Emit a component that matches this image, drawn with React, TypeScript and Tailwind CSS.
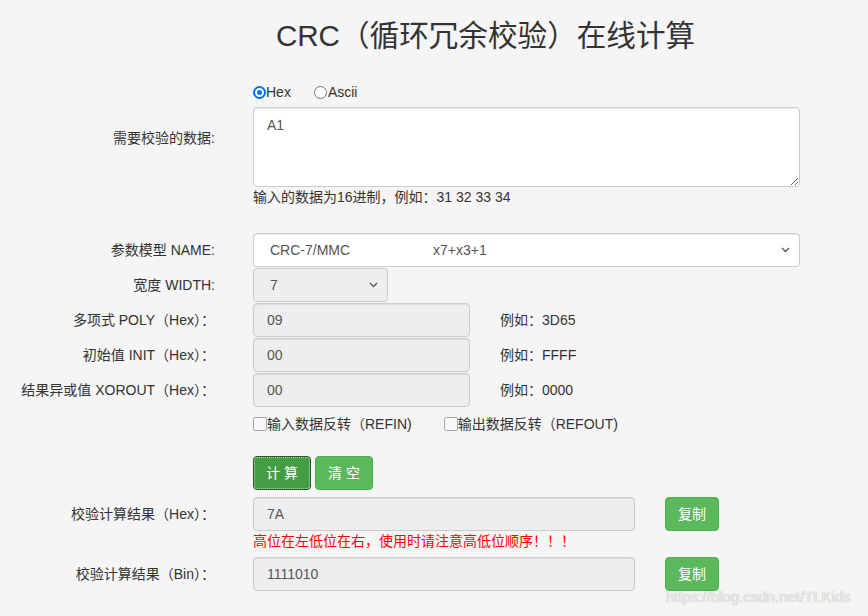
import React from "react";

const font = { fontFamily: '"Liberation Sans", "Noto Sans CJK SC", sans-serif' };

function Chevron() {
  return (
    <svg width="9" height="6" viewBox="0 0 9 6" className="shrink-0">
      <path d="M1 1 L4.5 4.5 L8 1" fill="none" stroke="#555" strokeWidth="1.3" />
    </svg>
  );
}

function Label({ children, className = "" }: { children: React.ReactNode; className?: string }) {
  return (
    <div className={"w-[215px] shrink-0 text-right text-[14px] leading-5 text-[#333] " + className}>
      {children}
    </div>
  );
}

function Row({ label, children }: { label: string; children: React.ReactNode }) {
  return (
    <div className="flex h-[34px] items-center">
      <Label>{label}</Label>
      <div className="ml-[38px] flex h-full items-center">{children}</div>
    </div>
  );
}

function GrayInput({ value, w }: { value: string; w: string }) {
  return (
    <div
      className={
        "flex h-[34px] items-center rounded-[4px] border border-[#ccc] bg-[#eee] pl-[13px] text-[14px] text-[#555] shadow-[inset_0_1px_1px_rgba(0,0,0,0.075)] " +
        w
      }
    >
      {value}
    </div>
  );
}

function CopyBtn() {
  return (
    <div className="ml-[30px] flex h-[34px] w-[54px] items-center justify-center rounded-[4px] border border-[#4cae4c] bg-[#5cb85c] text-[14px] text-white">
      复制
    </div>
  );
}

export default function App() {
  return (
    <div className="relative min-h-[616px] w-full overflow-hidden bg-[#f5f5f5]" style={font}>
      <h1 className="pl-[103px] pt-[19px] text-center text-[29.6px] font-normal leading-[34px] text-[#333]">
        CRC（循环冗余校验）在线计算
      </h1>

      {/* data group */}
      <div className="mt-[31px] flex items-start">
        <Label className="pt-[44px]">需要校验的数据:</Label>
        <div className="ml-[38px] flex flex-col">
          <div className="flex h-4 items-center text-[14px] leading-4 text-[#333]">
            <span className="flex h-[13px] w-[13px] items-center justify-center rounded-full border-2 border-[#0075ff] bg-white">
              <span className="h-[5px] w-[5px] rounded-full bg-[#0075ff]" />
            </span>
            <span>Hex</span>
            <span className="ml-[23px] h-[13px] w-[13px] rounded-full border border-[#767676] bg-white" />
            <span className="ml-px">Ascii</span>
          </div>
          <textarea
            defaultValue="A1"
            className="mt-[7px] h-[80px] w-[547px] rounded-[4px] border border-[#ccc] bg-white px-[13px] py-[7px] text-[14px] leading-5 text-[#555] shadow-[inset_0_1px_1px_rgba(0,0,0,0.075)] outline-none"
            style={font}
          />
          <div className="text-[14px] leading-5 text-[#333]">输入的数据为16进制，例如：31 32 33 34</div>
        </div>
      </div>

      <div className="mt-[26px] flex flex-col gap-px">
        <Row label="参数模型 NAME:">
          <div className="flex h-[34px] w-[547px] items-center rounded-[4px] border border-[#ccc] bg-white pl-[16px] pr-[9px] text-[14px] text-[#555] shadow-[inset_0_1px_1px_rgba(0,0,0,0.075)]">
            <span className="w-[163px]">CRC-7/MMC</span>
            <span className="flex-1">x7+x3+1</span>
            <Chevron />
          </div>
        </Row>
        <Row label="宽度 WIDTH:">
          <div className="flex h-[34px] w-[135px] items-center rounded-[4px] border border-[#ccc] bg-[#eee] pl-[16px] pr-[9px] text-[14px] text-[#555]">
            <span className="flex-1">7</span>
            <Chevron />
          </div>
        </Row>
        <Row label="多项式 POLY（Hex）：">
          <GrayInput value="09" w="w-[217px]" />
          <span className="ml-[30px] text-[14px] text-[#333]">例如：3D65</span>
        </Row>
        <Row label="初始值 INIT（Hex）：">
          <GrayInput value="00" w="w-[217px]" />
          <span className="ml-[30px] text-[14px] text-[#333]">例如：FFFF</span>
        </Row>
        <Row label="结果异或值 XOROUT（Hex）：">
          <GrayInput value="00" w="w-[217px]" />
          <span className="ml-[30px] text-[14px] text-[#333]">例如：0000</span>
        </Row>
      </div>

      <div className="mt-[7px] ml-[253px] flex h-5 items-center text-[14px] text-[#333]">
        <span className="h-[14px] w-[14px] rounded-[2px] border border-[#aaa] bg-[#f8f8f8]" />
        <span>输入数据反转（REFIN)</span>
        <span className="ml-[32px] h-[14px] w-[14px] rounded-[2px] border border-[#aaa] bg-[#f8f8f8]" />
        <span>输出数据反转（REFOUT)</span>
      </div>

      <div className="mt-[22px] ml-[253px] flex gap-[4px]">
        <div className="flex h-[34px] w-[58px] items-center justify-center rounded-[4px] border border-[#255625] bg-[#449d44] text-[14px] text-white outline-1 -outline-offset-2 outline-dotted outline-[#b8dcb8]">
          计 算
        </div>
        <div className="flex h-[34px] w-[58px] items-center justify-center rounded-[4px] border border-[#4cae4c] bg-[#5cb85c] text-[14px] text-white">
          清 空
        </div>
      </div>

      <div className="mt-[7px]">
        <Row label="校验计算结果（Hex）：">
          <GrayInput value="7A" w="w-[382px]" />
          <CopyBtn />
        </Row>
      </div>
      <div className="ml-[253px] text-[14px] leading-5 text-[#ff0000]">
        高位在左低位在右，使用时请注意高低位顺序！！！
      </div>
      <div className="mt-[6px]">
        <Row label="校验计算结果（Bin）：">
          <GrayInput value="1111010" w="w-[382px]" />
          <CopyBtn />
        </Row>
      </div>

      <div className="pointer-events-none absolute bottom-[9px] right-[17px] text-[15px] leading-5 text-white/85 [text-shadow:0_0_1px_rgba(0,0,0,0.45)]">
        https://blog.csdn.net/TLKids
      </div>
    </div>
  );
}
